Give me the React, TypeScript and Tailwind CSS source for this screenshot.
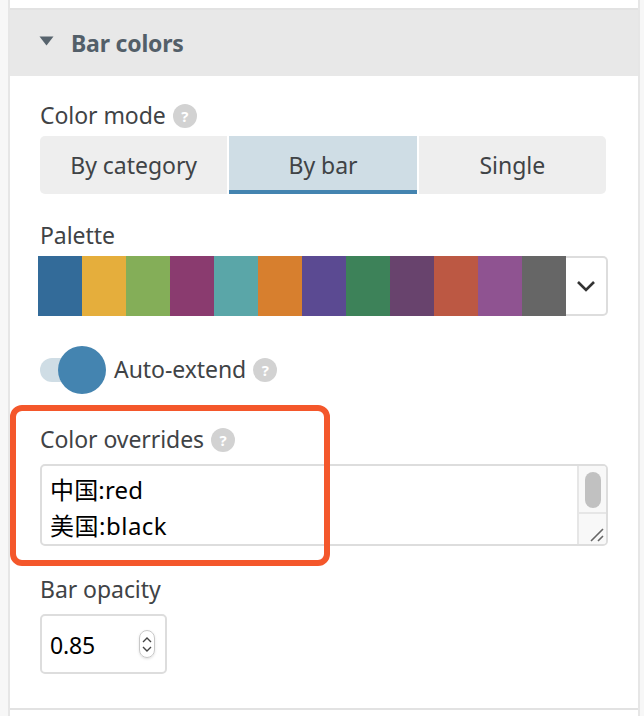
const FONT = "font-['Noto_Sans','Noto_Sans_CJK_SC',sans-serif]"

const swatches = [
  'bg-[#336b99]',
  'bg-[#e5ae3c]',
  'bg-[#84ae58]',
  'bg-[#8a3b6f]',
  'bg-[#5aa6a8]',
  'bg-[#d77f2e]',
  'bg-[#5b4a92]',
  'bg-[#3d8259]',
  'bg-[#68436d]',
  'bg-[#bc5843]',
  'bg-[#8f5391]',
  'bg-[#666666]',
]

function Help() {
  return (
    <span className="flex h-6 w-6 shrink-0 items-center justify-center rounded-full bg-[#d2d2d2] text-[15px] font-bold leading-none text-white">
      ?
    </span>
  )
}

function Label({ text, help }: { text: string; help?: boolean }) {
  return (
    <div className="flex h-[30px] items-center gap-[7px] text-[23px] leading-none tracking-[-0.06px] text-[#3f4346]">
      <span className="mb-[2px]">{text}</span>
      {help && <Help />}
    </div>
  )
}

function Segment({ text, active, className }: { text: string; active?: boolean; className?: string }) {
  return (
    <div
      className={`flex h-[58px] flex-1 items-center justify-center text-[23px] tracking-[-0.03px] text-[#3f4346] ${
        active ? 'border-b-4 border-[#4484b0] bg-[#cfdde5] pt-[4px]' : 'bg-[#eeeeee]'
      } ${className ?? ''}`}
    >
      {text}
    </div>
  )
}

export default function App() {
  return (
    <div className={`h-[716px] w-[644px] overflow-hidden bg-[#f7f7f7] pl-[8px] pr-[4px] ${FONT}`}>
      <div className="h-[716px] w-[632px] border-x-2 border-[#e6e6e6] bg-white">
        <div className="h-2" />
        <section className="h-[702px] border-y-2 border-[#e2e2e2]">
          <header className="flex h-[66px] items-center gap-[17px] bg-[#e8e8e8] pl-[29px]">
            <svg width="15" height="10" viewBox="0 0 15 10" className="mt-[-4px]">
              <path d="M0.5 0.5h14L7.5 9.5z" fill="#57636d" />
            </svg>
            <h2 className="text-[23px] font-bold tracking-[-0.2px] text-[#535f69]">Bar colors</h2>
          </header>

          <div className="pl-[30px] pr-[30px] pt-[25px]">
            <Label text="Color mode" help />
            <div className="mt-[5px] flex w-[566px] gap-[2px]">
              <Segment text="By category" className="rounded-l-[5px]" />
              <Segment text="By bar" active />
              <Segment text="Single" className="rounded-r-[5px]" />
            </div>

            <div className="mt-[27px]">
              <Label text="Palette" />
            </div>
            <div className="-ml-[2px] mt-[5px] flex h-[60px] w-[570px]">
              {swatches.map((c) => (
                <div key={c} className={`h-full w-[44px] ${c}`} />
              ))}
              <div className="flex flex-1 items-center justify-center rounded-r-[5px] border-2 border-l-0 border-[#dddddd]">
                <svg width="20" height="12" viewBox="0 0 20 12" fill="none">
                  <path d="M2 2l8 8 8-8" stroke="#333333" strokeWidth="2.6" />
                </svg>
              </div>
            </div>

            <div className="mt-[30px] flex h-12 items-center">
              <div className="relative h-6 w-[66px]">
                <div className="h-6 w-[50px] rounded-full bg-[#cfdde5]" />
                <div className="absolute left-[18px] top-[-12px] h-12 w-12 rounded-full bg-[#4484b0]" />
              </div>
              <div className="ml-[8px]">
                <Label text="Auto-extend" help />
              </div>
            </div>

            <div className="mt-[31px]">
              <Label text="Color overrides" help />
            </div>
            <div className="mt-[9px] flex h-[82px] w-[568px] overflow-hidden rounded-[5px] border-2 border-[#dddddd] bg-white">
              <div className="flex-1 pl-[8px] pt-[6px] text-[24px] leading-[36px] tracking-[0.15px] text-black">
                <div>中国:red</div>
                <div className="tracking-[0.5px]">美国:black</div>
              </div>
              <div className="flex w-[29px] flex-col border-l-2 border-[#e6e6e6] bg-[#f8f8f8]">
                <div className="flex h-[48px] justify-center border-b-2 border-[#e6e6e6] pt-[6px]">
                  <div className="h-[36px] w-4 rounded-full bg-[#c1c1c1]" />
                </div>
                <div className="flex flex-1 items-end justify-end pb-[1px] pr-[1px]">
                  <svg width="16" height="16" viewBox="0 0 16 16" fill="none">
                    <path d="M2 14L14 2M9 14l5-5" stroke="#666666" strokeWidth="1.6" />
                  </svg>
                </div>
              </div>
            </div>

            <div className="mt-[29px]">
              <Label text="Bar opacity" />
            </div>
            <div className="mt-[9px] flex h-[60px] w-[127px] items-center rounded-[5px] border-2 border-[#dddddd] pl-[8px] pr-[10px]">
              <span className="mt-[2px] flex-1 text-[23px] tracking-[-0.2px] text-black">0.85</span>
              <div className="flex h-[28px] w-[16px] flex-col items-center justify-center gap-[3px] rounded-full border border-[#c8c8c8] shadow-sm">
                <svg width="10" height="6" viewBox="0 0 10 6" fill="none">
                  <path d="M1 5l4-4 4 4" stroke="#444444" strokeWidth="1.4" />
                </svg>
                <svg width="10" height="6" viewBox="0 0 10 6" fill="none">
                  <path d="M1 1l4 4 4-4" stroke="#444444" strokeWidth="1.4" />
                </svg>
              </div>
            </div>
          </div>
        </section>
      </div>

      <div className="absolute left-[10px] top-[405px] h-[161px] w-[320px] rounded-[12px] border-[6px] border-[#f4572b]" />
    </div>
  )
}
